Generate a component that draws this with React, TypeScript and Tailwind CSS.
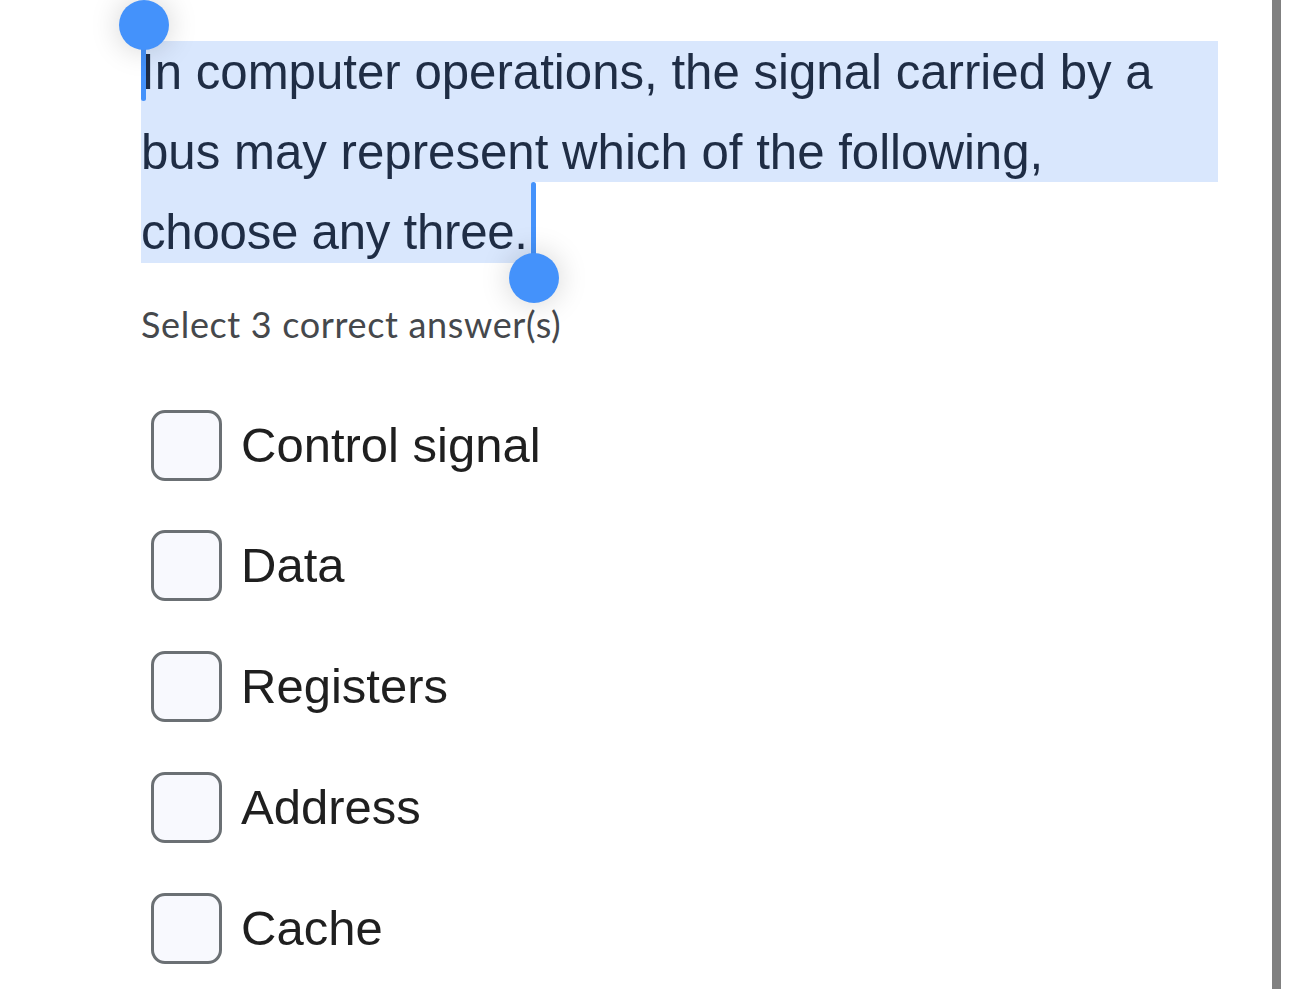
import React from "react";

const options = ["Control signal", "Data", "Registers", "Address", "Cache"];

export default function App() {
  return (
    <div className="relative h-[989px] w-[1290px] overflow-hidden bg-white">
      {/* scrollbar */}
      <div className="absolute right-[9px] top-0 h-full w-[9px] bg-[#808080]" />

      {/* selection highlight */}
      <div className="absolute left-[141px] top-[41px] h-[141px] w-[1077px] bg-[#d9e7fd]" />
      <div className="absolute left-[141px] top-[182px] h-[81px] w-[393px] bg-[#d9e7fd]" />

      <div className="relative pl-[141px] pt-[32px]">
        <div
          className="text-[49.2px] leading-[80px] text-[#1f2d45]"
          style={{ fontFamily: '"Liberation Sans", Arial, sans-serif' }}
        >
          <div>In computer operations, the signal carried by a</div>
          <div>bus may represent which of the following,</div>
          <div className="tracking-[-0.25px]">choose any three.</div>
        </div>

        <div
          className="mt-[32px] text-[36px] leading-[40px] tracking-[0.65px] text-[#45484c]"
          style={{ fontFamily: 'Lato, "Open Sans", sans-serif' }}
        >
          Select 3 correct answer(s)
        </div>

        <div className="mt-[66px] flex flex-col gap-[50.75px] pl-[10px]">
          {options.map((o) => (
            <div key={o} className="flex h-[70px] items-center gap-[19px]">
              <div className="h-[71px] w-[71px] shrink-0 rounded-[14px] border-[3px] border-[#6b7074] bg-[#f8f9fe]" />
              <span
                className="text-[49px] leading-none text-[#1f1f1f]"
                style={{ fontFamily: '"Liberation Sans", Arial, sans-serif' }}
              >
                {o}
              </span>
            </div>
          ))}
        </div>
      </div>

      {/* selection handles */}
      <div className="absolute left-[141px] top-[30px] h-[71px] w-[5px] rounded-full bg-[#4492fb]" />
      <div className="absolute left-[119px] top-[0px] h-[50px] w-[50px] rounded-full bg-[#4492fb] shadow-[0_0_30px_rgba(0,0,0,0.18)]" />
      <div className="absolute left-[531px] top-[182px] h-[90px] w-[5px] rounded-full bg-[#4492fb]" />
      <div className="absolute left-[509px] top-[253px] h-[50px] w-[50px] rounded-full bg-[#4492fb] shadow-[0_0_30px_rgba(0,0,0,0.18)]" />
    </div>
  );
}
